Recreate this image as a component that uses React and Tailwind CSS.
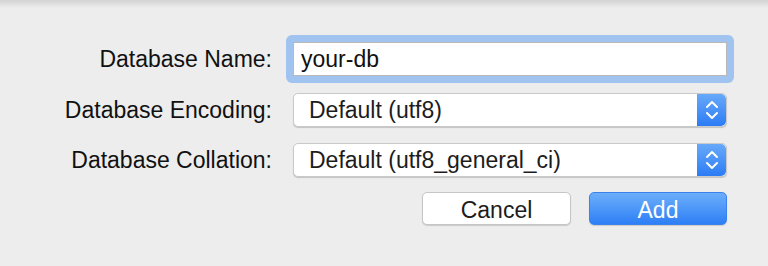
import React, { useState } from 'react';

// Chevron pair shown inside the blue stepper of a popup button
function Stepper() {
  return (
    <div className="flex h-full w-[29px] shrink-0 items-center justify-center rounded-r-[5px] bg-gradient-to-b from-[#67a9f9] to-[#2b7bf5]">
      <svg className="shrink-0" width="14" height="24" viewBox="0 0 14 24" fill="none" stroke="white" strokeWidth="2" strokeLinecap="round" strokeLinejoin="round">
        <path d="M2 9 L7 4 L12 9" />
        <path d="M2 15 L7 20 L12 15" />
      </svg>
    </div>
  );
}

function PopupButton({ value }) {
  return (
    <div className="flex h-[34px] items-center rounded-[5px] border border-[#c9c9c9] bg-white shadow-[0_1px_1px_rgba(0,0,0,0.18)]">
      <span className="flex-1 pl-[15px] text-[#1c1c1c]">{value}</span>
      <Stepper />
    </div>
  );
}

function App() {
  const [name, setName] = useState('your-db');

  return (
    <div
      className="relative h-[266px] w-[768px] overflow-hidden bg-[#ededed] text-[23px]"
      style={{ fontFamily: '"Liberation Sans", Arial, sans-serif' }}
    >
      {/* sombra do topo da janela */}
      <div className="absolute inset-x-0 top-0 h-[8px] bg-gradient-to-b from-[#d3d3d3] to-[#ededed]" />

      <div className="grid grid-cols-[272px_434px] gap-x-[21px] pt-[42px]">
        <label className="flex h-[34px] items-center justify-end text-[#111]">Database Name:</label>
        <div className="-m-[7px] rounded-[6px] bg-[#a0c4ef] p-[7px]">
          <input
            value={name}
            onChange={(e) => setName(e.target.value)}
            className="block h-[34px] w-full border border-[#b9b9b9] bg-white px-[7px] text-[#111] outline-none"
          />
        </div>

        <label className="mt-[17px] flex h-[34px] items-center justify-end text-[#111]">Database Encoding:</label>
        <div className="mt-[17px]">
          <PopupButton value="Default (utf8)" />
        </div>

        <label className="mt-[16px] flex h-[34px] items-center justify-end text-[#111]">Database Collation:</label>
        <div className="mt-[16px]">
          <PopupButton value="Default (utf8_general_ci)" />
        </div>

        <div />
        <div className="mt-[15px] flex justify-end gap-[18px]">
          <button className="h-[33px] w-[149px] rounded-[5px] border border-[#c6c6c6] bg-white text-[#1c1c1c] shadow-[0_1px_1px_rgba(0,0,0,0.15)]">
            Cancel
          </button>
          <button className="h-[33px] w-[138px] rounded-[5px] border border-[#3a83ee] bg-gradient-to-b from-[#6caefa] to-[#2d7ff6] text-white shadow-[0_1px_1px_rgba(0,0,0,0.15)]">
            Add
          </button>
        </div>
      </div>
    </div>
  );
}

export default App;
